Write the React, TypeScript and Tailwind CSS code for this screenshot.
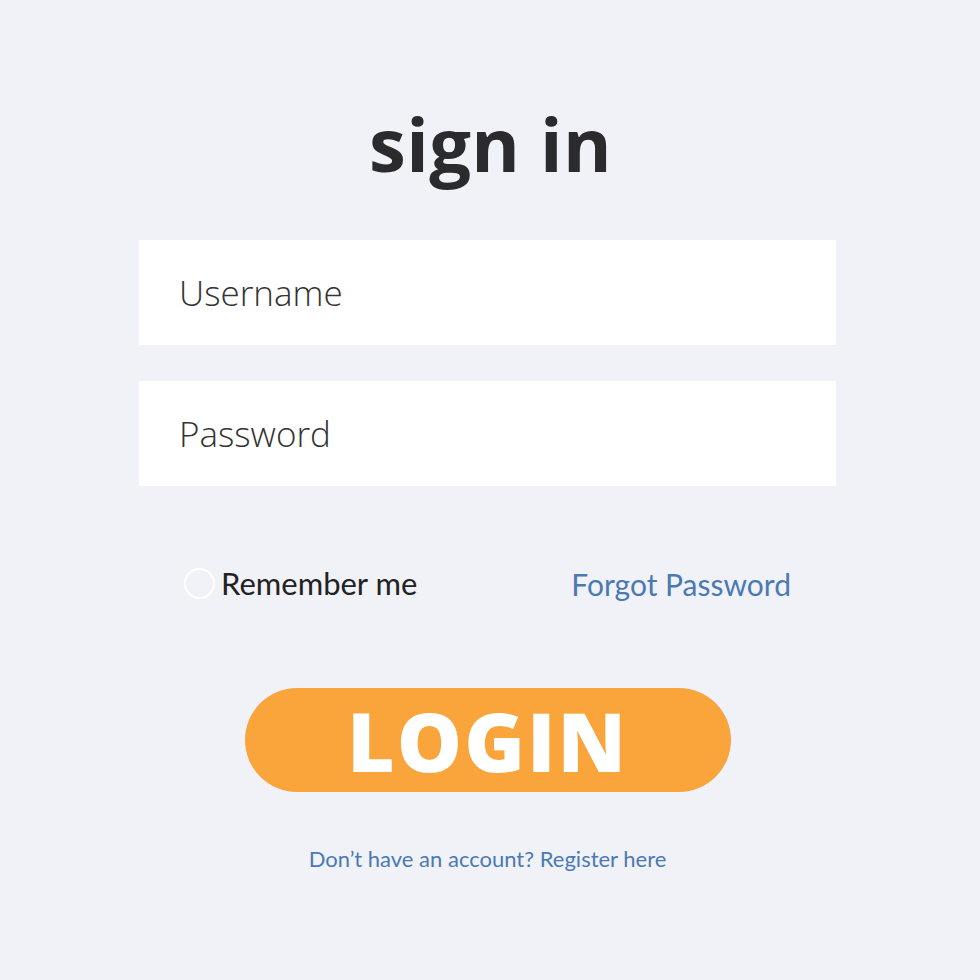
import React, { useState } from 'react';

const App: React.FC = () => {
  const [remember, setRemember] = useState(false);

  return (
    <div className="w-[980px] h-[980px] bg-[#f1f2f7] flex flex-col items-center pr-[5px]">
      <h1 className="mt-[107px] ml-[6px] text-[74px] leading-none font-bold text-[#2b2b2d] tracking-[0.005em] font-['Open_Sans',sans-serif]">
        sign in
      </h1>

      <form className="mt-[59px] w-[697px] flex flex-col gap-[36px]" onSubmit={(e) => e.preventDefault()}>
        <input
          type="text"
          placeholder="Username"
          className="h-[105px] w-full bg-white pl-[40px] text-[35px] font-light text-[#333] placeholder:text-[#333] outline-none font-['Open_Sans',sans-serif]"
        />
        <input
          type="password"
          placeholder="Password"
          className="h-[105px] w-full bg-white pl-[40px] text-[35px] font-light text-[#333] placeholder:text-[#333] outline-none font-['Open_Sans',sans-serif]"
        />
      </form>

      {/* Remember / forgot row */}
      <div className="mt-[82px] w-[607px] flex items-center justify-between font-['Lato',sans-serif]">
        <label className="flex items-center gap-[6px] cursor-pointer">
          <span
            onClick={() => setRemember(!remember)}
            className={`w-[31px] h-[31px] rounded-full border-2 border-white ${remember ? 'bg-white' : ''}`}
          />
          <span className="text-[31px] leading-none text-[#222]">Remember me</span>
        </label>
        <a href="#" className="text-[30px] leading-none text-[#4a79b3]">
          Forgot Password
        </a>
      </div>

      <button className="mt-[89px] w-[486px] h-[104px] rounded-full bg-[#f9a53b] text-white text-[82px] leading-none font-extrabold tracking-[0.025em] flex items-center justify-center font-['Open_Sans',sans-serif]">
        LOGIN
      </button>

      <a href="#" className="mt-[56px] text-[22px] leading-none text-[#4a79b3] font-['Lato',sans-serif]">
        Don’t have an account? Register here
      </a>
    </div>
  );
};

export default App;
